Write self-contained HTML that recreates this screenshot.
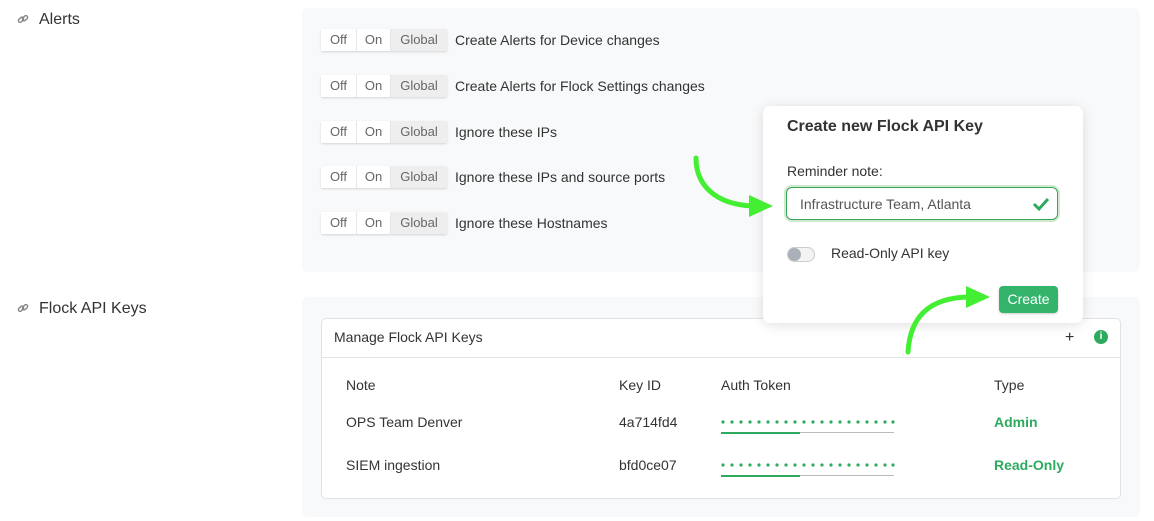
<!DOCTYPE html>
<html><head><style>
body{margin:0;width:1154px;height:521px;background:#fff;font-family:"Liberation Sans",sans-serif;color:#333;position:relative;overflow:hidden}
.a{position:absolute}
.panel{position:absolute;left:302px;width:838px;background:#f8f9fa;border-radius:6px}
.tg{position:absolute;left:321px;height:22px;display:flex;font-size:13px;color:#666;box-shadow:0 1px 2px rgba(0,0,0,.15);border-radius:2px}
.tg span{display:block;line-height:22px;text-align:center;background:#fff;border-right:1px solid #e6e6e6}
.lbl{position:absolute;left:455px;font-size:14px;color:#333}
.sec{position:absolute;left:39px;font-size:16px;color:#333}
</style></head><body>
<svg class="a" style="left:17px;top:13px" width="12" height="12" viewBox="0 0 12 12"><g fill="none" stroke="#888" stroke-width="1.4"><rect x="1" y="5" width="6" height="3.5" rx="1.7" transform="rotate(-45 4 6.75)"/><rect x="5" y="3.5" width="6" height="3.5" rx="1.7" transform="rotate(-45 8 5.25)"/></g></svg>
<div class="sec" style="top:11px">Alerts</div>
<svg class="a" style="left:17px;top:302px" width="12" height="12" viewBox="0 0 12 12"><g fill="none" stroke="#888" stroke-width="1.4"><rect x="1" y="5" width="6" height="3.5" rx="1.7" transform="rotate(-45 4 6.75)"/><rect x="5" y="3.5" width="6" height="3.5" rx="1.7" transform="rotate(-45 8 5.25)"/></g></svg>
<div class="sec" style="top:300px">Flock API Keys</div>
<div class="panel" style="top:8px;height:264px"></div>
<div class="panel" style="top:297px;height:220px"></div>

<div class="tg" style="top:29px"><span style="width:35px">Off</span><span style="width:33px">On</span><span style="width:56px;background:#eee;border:0">Global</span></div>
<div class="lbl" style="top:32px">Create Alerts for Device changes</div>
<div class="tg" style="top:75px"><span style="width:35px">Off</span><span style="width:33px">On</span><span style="width:56px;background:#eee;border:0">Global</span></div>
<div class="lbl" style="top:78px">Create Alerts for Flock Settings changes</div>
<div class="tg" style="top:121px"><span style="width:35px">Off</span><span style="width:33px">On</span><span style="width:56px;background:#eee;border:0">Global</span></div>
<div class="lbl" style="top:124px">Ignore these IPs</div>
<div class="tg" style="top:166px"><span style="width:35px">Off</span><span style="width:33px">On</span><span style="width:56px;background:#eee;border:0">Global</span></div>
<div class="lbl" style="top:169px">Ignore these IPs and source ports</div>
<div class="tg" style="top:212px"><span style="width:35px">Off</span><span style="width:33px">On</span><span style="width:56px;background:#eee;border:0">Global</span></div>
<div class="lbl" style="top:215px">Ignore these Hostnames</div>

<div class="a" style="left:321px;top:318px;width:798px;height:179px;background:#fff;border:1px solid #e2e2e2;border-radius:5px"></div>
<div class="a" style="left:322px;top:357px;width:798px;height:1px;background:#e4e4e4"></div>
<div class="a" style="left:334px;top:329px;font-size:14px">Manage Flock API Keys</div>
<div class="a" style="left:1065px;top:329px;font-size:16px;color:#333">+</div>
<div class="a" style="left:1094px;top:330px;width:14px;height:14px;border-radius:50%;background:#2eaa5f;color:#fff;font-size:10px;font-weight:bold;text-align:center;line-height:14px">i</div>
<div class="a" style="left:346px;top:377px;font-size:14px">Note</div>
<div class="a" style="left:619px;top:377px;font-size:14px">Key ID</div>
<div class="a" style="left:721px;top:377px;font-size:14px">Auth Token</div>
<div class="a" style="left:994px;top:377px;font-size:14px">Type</div>
<div class="a" style="left:346px;top:414px;font-size:14px">OPS Team Denver</div>
<div class="a" style="left:619px;top:414px;font-size:14px">4a714fd4</div>
<div class="a" style="left:346px;top:457px;font-size:14px">SIEM ingestion</div>
<div class="a" style="left:619px;top:457px;font-size:14px">bfd0ce07</div>
<svg class="a" style="left:720px;top:415px" width="176" height="64">
<g fill="#2eaa5f">
<circle cx="3" cy="7" r="1.6"/><circle cx="12" cy="7" r="1.6"/><circle cx="21" cy="7" r="1.6"/><circle cx="30" cy="7" r="1.6"/><circle cx="39" cy="7" r="1.6"/><circle cx="48" cy="7" r="1.6"/><circle cx="57" cy="7" r="1.6"/><circle cx="66" cy="7" r="1.6"/><circle cx="75" cy="7" r="1.6"/><circle cx="84" cy="7" r="1.6"/><circle cx="93" cy="7" r="1.6"/><circle cx="102" cy="7" r="1.6"/><circle cx="111" cy="7" r="1.6"/><circle cx="120" cy="7" r="1.6"/><circle cx="129" cy="7" r="1.6"/><circle cx="138" cy="7" r="1.6"/><circle cx="147" cy="7" r="1.6"/><circle cx="156" cy="7" r="1.6"/><circle cx="165" cy="7" r="1.6"/><circle cx="173" cy="7" r="1.6"/>
<circle cx="3" cy="50" r="1.6"/><circle cx="12" cy="50" r="1.6"/><circle cx="21" cy="50" r="1.6"/><circle cx="30" cy="50" r="1.6"/><circle cx="39" cy="50" r="1.6"/><circle cx="48" cy="50" r="1.6"/><circle cx="57" cy="50" r="1.6"/><circle cx="66" cy="50" r="1.6"/><circle cx="75" cy="50" r="1.6"/><circle cx="84" cy="50" r="1.6"/><circle cx="93" cy="50" r="1.6"/><circle cx="102" cy="50" r="1.6"/><circle cx="111" cy="50" r="1.6"/><circle cx="120" cy="50" r="1.6"/><circle cx="129" cy="50" r="1.6"/><circle cx="138" cy="50" r="1.6"/><circle cx="147" cy="50" r="1.6"/><circle cx="156" cy="50" r="1.6"/><circle cx="165" cy="50" r="1.6"/><circle cx="173" cy="50" r="1.6"/>
</g></svg>
<div class="a" style="left:721px;top:432px;width:173px;height:1px;background:#bbb"></div><div class="a" style="left:721px;top:432px;width:79px;height:2px;background:#2eaa5f"></div>
<div class="a" style="left:721px;top:475px;width:173px;height:1px;background:#bbb"></div><div class="a" style="left:721px;top:475px;width:79px;height:2px;background:#2eaa5f"></div>
<div class="a" style="left:994px;top:414px;font-size:14px;color:#2eaa5f;font-weight:bold">Admin</div>
<div class="a" style="left:994px;top:457px;font-size:14px;color:#2eaa5f;font-weight:bold">Read-Only</div>

<div class="a" style="left:763px;top:106px;width:320px;height:217px;background:#fff;border-radius:7px;box-shadow:0 2px 12px rgba(0,0,0,.12)"></div>
<div class="a" style="left:787px;top:118px;font-size:16px;font-weight:bold;color:#333">Create new Flock API Key</div>
<div class="a" style="left:787px;top:163px;font-size:14px">Reminder note:</div>
<div class="a" style="left:786px;top:187px;width:270px;height:31px;border:1px solid #3aa655;border-radius:6px;box-shadow:0 0 0 2px #cfe9d3;background:#fff"></div>
<div class="a" style="left:800px;top:196px;font-size:14px;color:#555">Infrastructure Team, Atlanta</div>
<svg class="a" style="left:1032px;top:196px" width="18" height="16"><path d="M2 8 L7 13 L16 3" stroke="#2eaa5f" stroke-width="3" fill="none"/></svg>
<div class="a" style="left:787px;top:247px;width:26px;height:13px;border:1px solid #ccc;border-radius:8px;background:#f3f3f3"></div>
<div class="a" style="left:788px;top:248px;width:13px;height:13px;border-radius:50%;background:#aab0b8"></div>
<div class="a" style="left:831px;top:245px;font-size:14px">Read-Only API key</div>
<div class="a" style="left:999px;top:286px;width:59px;height:27px;border-radius:4px;background:#34b36b;color:#fff;font-size:14px;text-align:center;line-height:27px;box-shadow:0 1px 2px rgba(0,0,0,.2)">Create</div>

<svg class="a" style="left:0;top:0" width="1154" height="521">
<path d="M696 158 C696 185 715 204 752 206" stroke="#44ee33" stroke-width="5" fill="none" stroke-linecap="round"/>
<polygon points="749,195 773,206 749,217" fill="#44ee33"/>
<path d="M908 352 C910 318 928 298 968 297" stroke="#44ee33" stroke-width="5" fill="none" stroke-linecap="round"/>
<polygon points="966,286 990,297 966,308" fill="#44ee33"/>
</svg>
</body></html>
